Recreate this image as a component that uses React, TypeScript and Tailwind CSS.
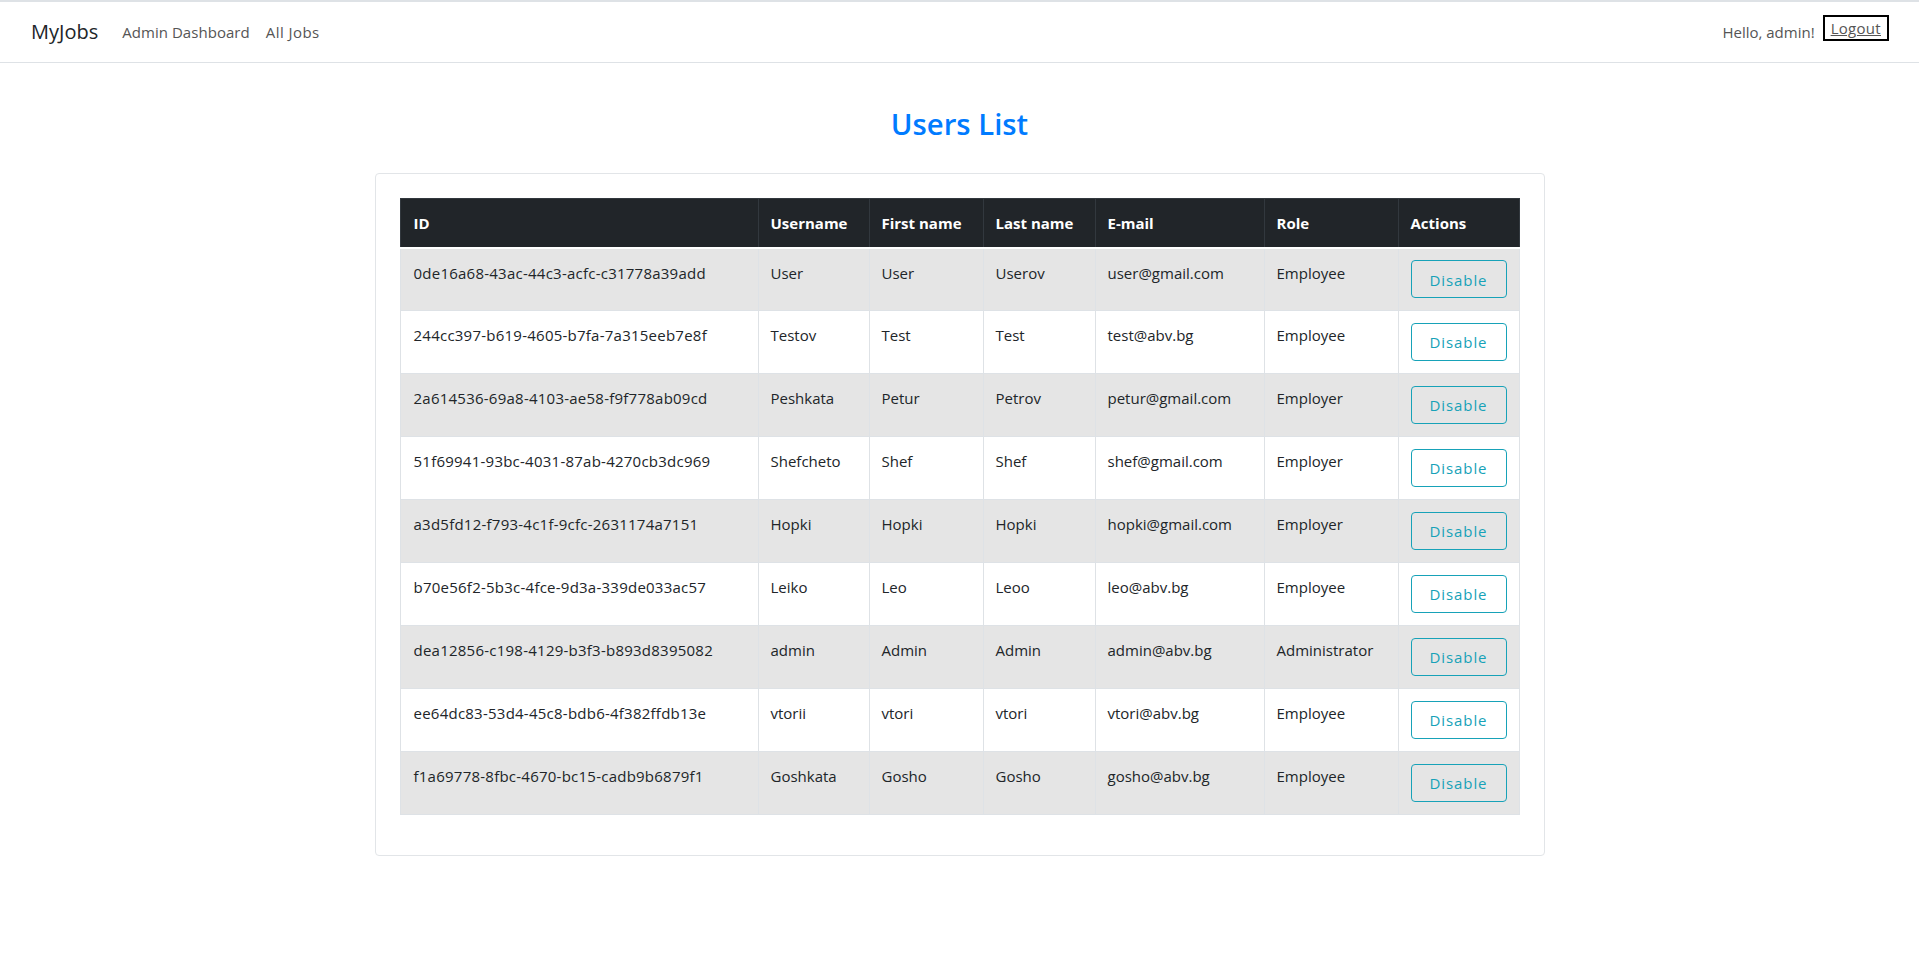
const rows = [
  ["0de16a68-43ac-44c3-acfc-c31778a39add", "User", "User", "Userov", "user@gmail.com", "Employee"],
  ["244cc397-b619-4605-b7fa-7a315eeb7e8f", "Testov", "Test", "Test", "test@abv.bg", "Employee"],
  ["2a614536-69a8-4103-ae58-f9f778ab09cd", "Peshkata", "Petur", "Petrov", "petur@gmail.com", "Employer"],
  ["51f69941-93bc-4031-87ab-4270cb3dc969", "Shefcheto", "Shef", "Shef", "shef@gmail.com", "Employer"],
  ["a3d5fd12-f793-4c1f-9cfc-2631174a7151", "Hopki", "Hopki", "Hopki", "hopki@gmail.com", "Employer"],
  ["b70e56f2-5b3c-4fce-9d3a-339de033ac57", "Leiko", "Leo", "Leoo", "leo@abv.bg", "Employee"],
  ["dea12856-c198-4129-b3f3-b893d8395082", "admin", "Admin", "Admin", "admin@abv.bg", "Administrator"],
  ["ee64dc83-53d4-45c8-bdb6-4f382ffdb13e", "vtorii", "vtori", "vtori", "vtori@abv.bg", "Employee"],
  ["f1a69778-8fbc-4670-bc15-cadb9b6879f1", "Goshkata", "Gosho", "Gosho", "gosho@abv.bg", "Employee"],
];
const heads = ["ID", "Username", "First name", "Last name", "E-mail", "Role", "Actions"];
const widths = ["w-[358px]", "w-[111px]", "w-[114px]", "w-[112px]", "w-[169px]", "w-[134px]", "w-[121px]"];

export default function App() {
  return (
    <div className="min-h-[965px] bg-white font-['Open_Sans','Noto_Sans',sans-serif] text-[15px] text-[#212529]">
      <nav className="flex h-[63px] items-center border-t-2 border-b border-t-[#dee2e6] border-b-[#dee2e6] pl-[31px] pr-[30px]">
        <span className="mr-6 text-[20px] leading-none">MyJobs</span>
        <span className="tracking-[0.05px] text-[#555]">Admin Dashboard</span>
        <span className="ml-[16px] tracking-[0.45px] text-[#555]">All Jobs</span>
        <span className="ml-auto text-[#555]">Hello, admin!</span>
        <span className="mb-[8px] ml-2 border-2 border-black px-[6px] tracking-[0.3px] text-[#555] underline">Logout</span>
      </nav>
      <h1 className="mt-[41px] text-center text-[29.3px] font-semibold leading-[40px] text-[#007bff]">Users List</h1>
      <div className="mx-auto mt-[29px] w-[1170px] rounded-[4px] border border-[#e2e5e8] px-6 pt-6 pb-10">
        <table className="w-[1119px] table-fixed border-collapse">
          <thead>
            <tr className="h-[49px] bg-[#212529] text-left font-bold text-white">
              {heads.map((h, i) => (
                <th key={h} className={`${widths[i]} border border-[#32383e] border-b-2 border-b-white py-0 pr-3 ${i === 0 ? "pl-[13px]" : "pl-3"} align-middle`}>{h}</th>
              ))}
            </tr>
          </thead>
          <tbody>
            {rows.map((r, i) => (
              <tr key={r[0]} className={`h-[63px] ${i % 2 === 0 ? "bg-[#e5e5e5]" : "bg-white"}`}>
                {r.map((c, j) => (
                  <td key={j} className={`border border-[#dee2e6] pt-0 pr-3 pb-[13px] align-middle ${j === 0 ? "pl-[13px] tracking-[0.24px]" : "pl-3"}`}>{c}</td>
                ))}
                <td className="border border-[#dee2e6] px-3 align-middle">
                  <button className="h-[38px] w-[96px] rounded-[4px] border border-[#17a2b8] pt-[1px] text-[15px] tracking-[0.9px] text-[#17a2b8]">Disable</button>
                </td>
              </tr>
            ))}
          </tbody>
        </table>
      </div>
    </div>
  );
}
